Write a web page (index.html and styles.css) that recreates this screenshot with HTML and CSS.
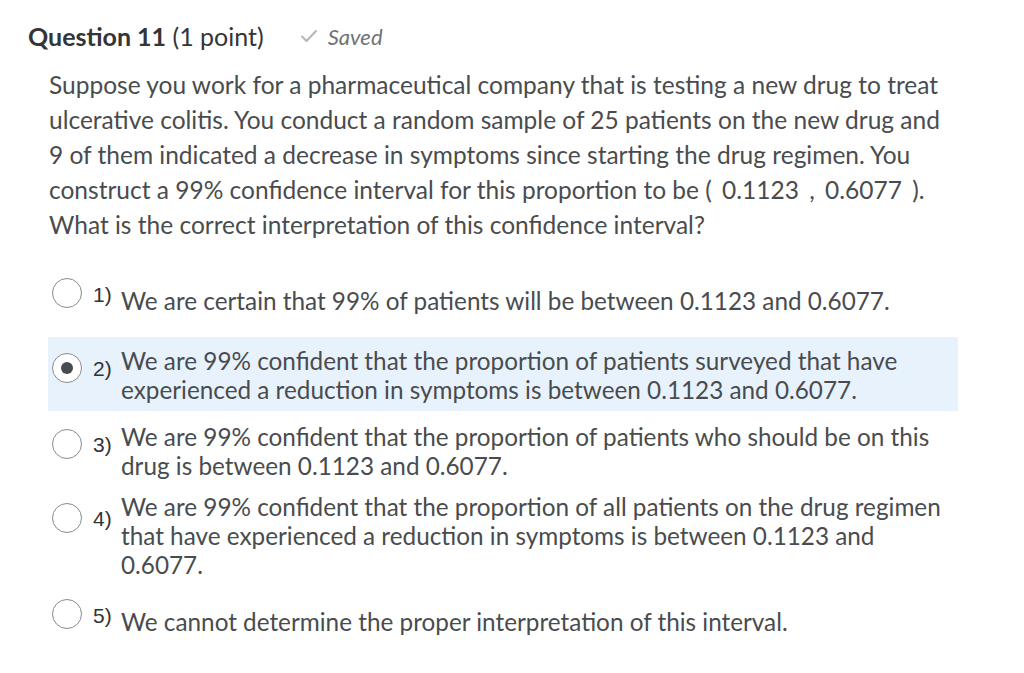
FILE: index.html
```html
<!DOCTYPE html>
<html lang="en">
<head>
<meta charset="utf-8">
<title>Question 11</title>
<link rel="stylesheet" href="styles.css">
</head>
<body>
<div class="page">
  <div class="q-header">
    <h2 class="q-title"><strong>Question 11</strong> <span class="q-points">(1 point)</span></h2>
    <span class="saved">
      <svg class="check" width="18" height="14" viewBox="0 0 18 14" aria-hidden="true"><path d="M2 7.5 L6.5 12 L16 2" fill="none" stroke="#b3b7ba" stroke-width="2" stroke-linecap="round" stroke-linejoin="round"/></svg>
      <em>Saved</em>
    </span>
  </div>
  <p class="q-text">Suppose you work for a pharmaceutical company that is testing a new drug to treat ulcerative colitis. You conduct a random sample of 25 patients on the new drug and 9 of them indicated a decrease in symptoms since starting the drug regimen. You construct a 99% confidence interval for this proportion to be <span class="interval">( 0.1123 , 0.6077 )</span>. What is the correct interpretation of this confidence interval?</p>

  <div class="options">
    <div class="opt opt-1 single">
      <div class="control"><span class="radio"></span><span class="num">1)</span></div>
      <div class="opt-text">We are certain that 99% of patients will be between 0.1123 and 0.6077.</div>
    </div>
    <div class="opt opt-2 multi selected">
      <div class="control"><span class="radio checked"></span><span class="num">2)</span></div>
      <div class="opt-text">We are 99% confident that the proportion of patients surveyed that have experienced a reduction in symptoms is between 0.1123 and 0.6077.</div>
    </div>
    <div class="opt opt-3 multi">
      <div class="control"><span class="radio"></span><span class="num">3)</span></div>
      <div class="opt-text">We are 99% confident that the proportion of patients who should be on this drug is between 0.1123 and 0.6077.</div>
    </div>
    <div class="opt opt-4 triple">
      <div class="control"><span class="radio"></span><span class="num">4)</span></div>
      <div class="opt-text">We are 99% confident that the proportion of all patients on the drug regimen that have experienced a reduction in symptoms is between 0.1123 and 0.6077.</div>
    </div>
    <div class="opt opt-5 single">
      <div class="control"><span class="radio"></span><span class="num">5)</span></div>
      <div class="opt-text">We cannot determine the proper interpretation of this interval.</div>
    </div>
  </div>
</div>
</body>
</html>
```
FILE: styles.css
```css
html, body {
  margin: 0;
  padding: 0;
  background: #ffffff;
}
body {
  font-family: Lato, "Open Sans", sans-serif;
  color: #494c4e;
}
.page {
  padding: 21px 0 0 28px;
}
.q-header {
  display: flex;
  align-items: center;
  height: 30px;
}
.q-title {
  margin: 0;
  font-size: 25px;
  font-weight: 400;
  line-height: 30px;
  color: #333536;
}
.q-title strong {
  font-weight: 700;
}
.saved {
  display: flex;
  align-items: center;
  margin-left: 36px;
  color: #6e7376;
  font-size: 22px;
}
.saved .check {
  margin-right: 10px;
}
.q-text {
  margin: 16px 0 0 21px;
  width: 895px;
  font-size: 24.5px;
  line-height: 35px;
}
.interval {
  word-spacing: 4px;
}
.options {
  margin: 40px 0 0 20px;
  width: 910px;
  display: flex;
  flex-direction: column;
}
.opt {
  display: flex;
  align-items: flex-start;
  padding: 4px 0 4px 4px;
}
.opt.selected {
  background: #e8f2fd;
  padding: 9.5px 0 6.5px 4px;
}
.control {
  display: flex;
  align-items: center;
  flex: 0 0 69px;
}
.single .control { margin-top: -8px; }
.multi .control { margin-top: 6.5px; }
.triple .control { margin-top: 10.5px; }
.radio {
  box-sizing: border-box;
  width: 30px;
  height: 30px;
  border: 1px solid #868c90;
  border-radius: 50%;
  background: #ffffff;
  position: relative;
  flex: 0 0 30px;
}
.radio.checked::after {
  content: "";
  position: absolute;
  left: 8px;
  top: 8px;
  width: 12px;
  height: 12px;
  border-radius: 50%;
  background: #494c4e;
}
.num {
  font-family: "Liberation Sans", Arial, sans-serif;
  font-size: 21px;
  margin-left: 11px;
  margin-top: 3px;
  color: #333;
}
.opt-text {
  font-size: 24.3px;
  line-height: 29px;
  flex: 1;
}
.opt-2 { margin-top: 17.5px; }
.opt-3 { margin-top: 7.5px; }
.opt-4 { margin-top: 4px; }
.opt-5 { margin-top: 20px; }
```
